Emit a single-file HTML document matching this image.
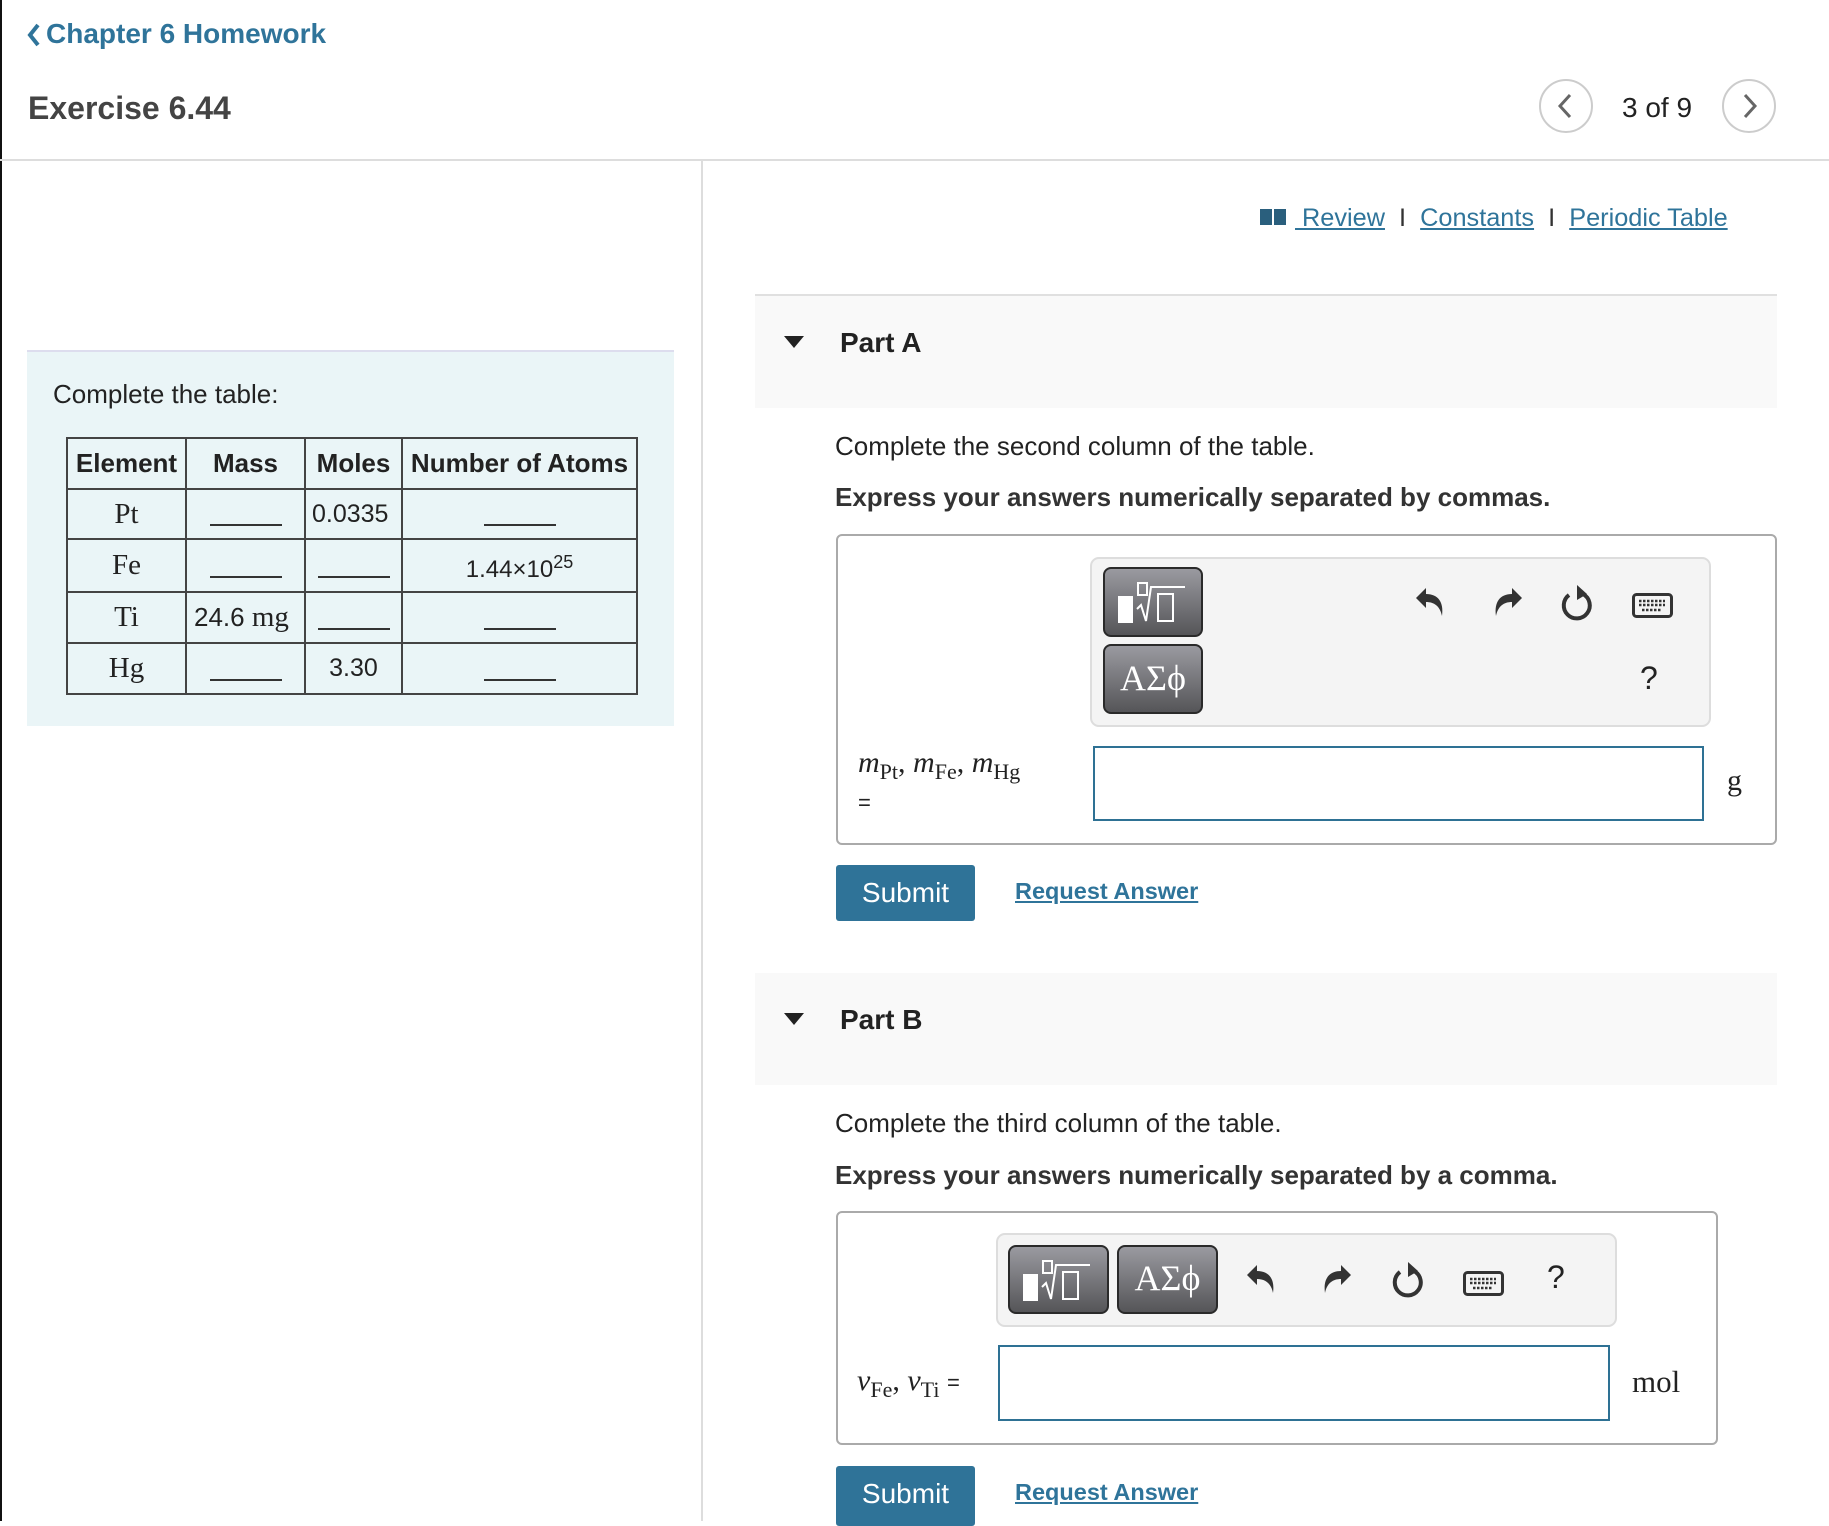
<!DOCTYPE html>
<html><head><meta charset="utf-8"><style>
*{margin:0;padding:0;box-sizing:border-box}
body{width:1829px;height:1521px;position:relative;overflow:hidden;background:#fff;font-family:"Liberation Sans",Arial,sans-serif;color:#222}
.a{position:absolute;white-space:nowrap}
.lnk{color:#2f749a;text-decoration:underline}
.btn{position:absolute;border-radius:8px;background:linear-gradient(#9a9aa0,#555558);border:2px solid #2a2a2a;color:#fff}
.tb{position:absolute;background:#f4f4f4;border:2px solid #ddd;border-radius:9px}
.inp{position:absolute;border:2px solid #2e7194;background:#fff}
.ser{font-family:"Liberation Serif",serif}
table{border-collapse:collapse;position:absolute;left:66px;top:437px}
td{border:2px solid #444;padding:0;text-align:center}
.bl{display:inline-block;width:72px;border-bottom:2px solid #333;vertical-align:bottom;margin-top:22px}
</style></head><body>
<div class="a" style="left:0;top:0;width:2px;height:1521px;background:#111"></div>
<svg class="a" style="left:26px;top:22px" width="16" height="26"><path d="M12 3 L4 13 L12 23" stroke="#2f749a" stroke-width="4" fill="none"/></svg>
<div class="a" style="left:46px;top:18px;font-size:28px;font-weight:bold;color:#2f749a">Chapter 6 Homework</div>
<div class="a" style="left:28px;top:90px;font-size:32px;font-weight:bold;color:#444">Exercise 6.44</div>
<svg class="a" style="left:1538px;top:78px" width="56" height="56"><circle cx="28" cy="28" r="26" fill="#fff" stroke="#ccc" stroke-width="2"/><path d="M32 17 L22 28 L32 39" stroke="#666" stroke-width="3" fill="none"/></svg>
<div class="a" style="left:1622px;top:92px;font-size:28px;color:#222">3 of 9</div>
<svg class="a" style="left:1721px;top:78px" width="56" height="56"><circle cx="28" cy="28" r="26" fill="#fff" stroke="#ccc" stroke-width="2"/><path d="M24 17 L34 28 L24 39" stroke="#666" stroke-width="3" fill="none"/></svg>
<div class="a" style="left:0;top:159px;width:1829px;height:2px;background:#ddd"></div>
<div class="a" style="left:701px;top:161px;width:2px;height:1360px;background:#ddd"></div>

<div class="a" style="left:27px;top:350px;width:647px;height:376px;background:#eaf5f7;border-top:2px solid #dde"></div>
<div class="a" style="left:53px;top:379px;font-size:26px;color:#222">Complete the table:</div>
<table>
<tr style="height:51px;font-weight:bold;font-size:26px"><td style="width:119px">Element</td><td style="width:119px">Mass</td><td style="width:97px">Moles</td><td style="width:235px">Number of Atoms</td></tr>
<tr style="height:50px"><td class="ser" style="font-size:29px">Pt</td><td><span class="bl"></span></td><td style="font-size:25px;text-align:left;padding-left:6px">0.0335</td><td><span class="bl"></span></td></tr>
<tr style="height:53px"><td class="ser" style="font-size:29px">Fe</td><td><span class="bl"></span></td><td><span class="bl"></span></td><td style="font-size:24px;vertical-align:top;padding-top:12px">1.44×10<sup style="font-size:18px">25</sup></td></tr>
<tr style="height:51px"><td class="ser" style="font-size:29px">Ti</td><td style="font-size:26px;text-align:left;padding-left:7px"><span>24.6 </span><span class="ser" style="font-size:29px">mg</span></td><td><span class="bl"></span></td><td><span class="bl"></span></td></tr>
<tr style="height:51px"><td class="ser" style="font-size:29px">Hg</td><td><span class="bl"></span></td><td style="font-size:25px">3.30</td><td><span class="bl"></span></td></tr>
</table>

<svg class="a" style="left:1260px;top:207px" width="28" height="20"><rect x="0" y="2" width="12" height="16" fill="#2a5f7d"/><rect x="14" y="2" width="12" height="16" fill="#2a5f7d"/></svg>
<div class="a" style="left:1295px;top:204px;font-size:25.3px;color:#333"><span class="lnk">&nbsp;Review</span>&nbsp; I &nbsp;<span class="lnk">Constants</span>&nbsp; I &nbsp;<span class="lnk">Periodic Table</span></div>

<div class="a" style="left:755px;top:294px;width:1022px;height:114px;background:#f9f9f9;border-top:2px solid #e0e0e0"></div>
<svg class="a" style="left:782px;top:335px" width="24" height="14"><path d="M2 1 L22 1 L12 13Z" fill="#222"/></svg>
<div class="a" style="left:840px;top:327px;font-size:28px;font-weight:bold">Part A</div>
<div class="a" style="left:835px;top:431px;font-size:26px">Complete the second column of the table.</div>
<div class="a" style="left:835px;top:482px;font-size:26px;font-weight:bold;color:#333">Express your answers numerically separated by commas.</div>
<div class="a" style="left:836px;top:534px;width:941px;height:311px;border:2px solid #aaa;border-radius:6px"></div>
<div class="tb" style="left:1090px;top:557px;width:621px;height:170px"></div>
<div class="btn" style="left:1103px;top:567px;width:100px;height:70px"><svg width="96" height="66"><rect x="13" y="27" width="15" height="27" fill="#fff"/><rect x="33" y="14" width="9" height="12" fill="none" stroke="#fff" stroke-width="2"/><path d="M32 40 L36 36 L41 52 L46 18 L80 18" stroke="#fff" stroke-width="2" fill="none"/><rect x="53" y="25" width="15" height="27" fill="none" stroke="#fff" stroke-width="2"/></svg></div>
<div class="btn ser" style="left:1103px;top:644px;width:100px;height:70px;font-size:36px;text-align:center;line-height:64px">ΑΣϕ</div>
<svg class="a" style="left:1410px;top:584px" width="40" height="40" viewBox="0 0 40 40"><path d="M6 14 L16 4 L16 10 C28 10 34 18 32 32 C30 22 24 18 16 18 L16 24Z" fill="#333"/></svg>
<svg class="a" style="left:1488px;top:584px" width="40" height="40" viewBox="0 0 40 40"><path d="M34 14 L24 4 L24 10 C12 10 6 18 8 32 C10 22 16 18 24 18 L24 24Z" fill="#333"/></svg>
<svg class="a" style="left:1557px;top:583px" width="40" height="42" viewBox="0 0 40 42"><path d="M26 11 A13 13 0 1 1 12 12" stroke="#333" stroke-width="4" fill="none"/><path d="M20 2 L30 11 L20 17Z" fill="#333"/></svg>
<svg class="a" style="left:1632px;top:593px" width="42" height="26"><rect x="1.5" y="1.5" width="38" height="22" rx="3" fill="none" stroke="#333" stroke-width="3"/><path d="M7 8h26M7 12h26M10 17h20" stroke="#333" stroke-width="2.5" stroke-dasharray="2.5 1.5"/></svg>
<div class="a" style="left:1640px;top:660px;font-size:32px;color:#222">?</div>
<div class="a ser" style="left:858px;top:746px;font-size:30px"><i>m</i><sub style="font-size:22px">Pt</sub>, <i>m</i><sub style="font-size:22px">Fe</sub>, <i>m</i><sub style="font-size:22px">Hg</sub></div>
<div class="a" style="left:858px;top:790px;font-size:22px">=</div>
<div class="inp" style="left:1093px;top:746px;width:611px;height:75px"></div>
<div class="a ser" style="left:1727px;top:764px;font-size:30px">g</div>
<div class="a" style="left:836px;top:865px;width:139px;height:56px;background:#2f7398;border-radius:3px;color:#fff;font-size:28px;text-align:center;line-height:56px">Submit</div>
<div class="a lnk" style="left:1015px;top:878px;font-size:23.5px;font-weight:bold">Request Answer</div>

<div class="a" style="left:755px;top:973px;width:1022px;height:112px;background:#f9f9f9"></div>
<svg class="a" style="left:782px;top:1012px" width="24" height="14"><path d="M2 1 L22 1 L12 13Z" fill="#222"/></svg>
<div class="a" style="left:840px;top:1004px;font-size:28px;font-weight:bold">Part B</div>
<div class="a" style="left:835px;top:1108px;font-size:26px">Complete the third column of the table.</div>
<div class="a" style="left:835px;top:1160px;font-size:26px;font-weight:bold;color:#333">Express your answers numerically separated by a comma.</div>
<div class="a" style="left:836px;top:1211px;width:882px;height:234px;border:2px solid #aaa;border-radius:6px"></div>
<div class="tb" style="left:996px;top:1233px;width:621px;height:94px"></div>
<div class="btn" style="left:1008px;top:1245px;width:101px;height:69px"><svg width="97" height="65"><rect x="13" y="27" width="15" height="27" fill="#fff"/><rect x="33" y="14" width="9" height="12" fill="none" stroke="#fff" stroke-width="2"/><path d="M32 40 L36 36 L41 52 L46 18 L80 18" stroke="#fff" stroke-width="2" fill="none"/><rect x="53" y="25" width="15" height="27" fill="none" stroke="#fff" stroke-width="2"/></svg></div>
<div class="btn ser" style="left:1117px;top:1245px;width:101px;height:69px;font-size:36px;text-align:center;line-height:63px">ΑΣϕ</div>
<svg class="a" style="left:1241px;top:1261px" width="40" height="40" viewBox="0 0 40 40"><path d="M6 14 L16 4 L16 10 C28 10 34 18 32 32 C30 22 24 18 16 18 L16 24Z" fill="#333"/></svg>
<svg class="a" style="left:1317px;top:1261px" width="40" height="40" viewBox="0 0 40 40"><path d="M34 14 L24 4 L24 10 C12 10 6 18 8 32 C10 22 16 18 24 18 L24 24Z" fill="#333"/></svg>
<svg class="a" style="left:1388px;top:1260px" width="40" height="42" viewBox="0 0 40 42"><path d="M26 11 A13 13 0 1 1 12 12" stroke="#333" stroke-width="4" fill="none"/><path d="M20 2 L30 11 L20 17Z" fill="#333"/></svg>
<svg class="a" style="left:1463px;top:1271px" width="42" height="26"><rect x="1.5" y="1.5" width="38" height="22" rx="3" fill="none" stroke="#333" stroke-width="3"/><path d="M7 8h26M7 12h26M10 17h20" stroke="#333" stroke-width="2.5" stroke-dasharray="2.5 1.5"/></svg>
<div class="a" style="left:1547px;top:1259px;font-size:32px;color:#222">?</div>
<div class="a ser" style="left:857px;top:1364px;font-size:30px"><i>ν</i><sub style="font-size:22px">Fe</sub>, <i>ν</i><sub style="font-size:22px">Ti</sub> <span style="font-family:'Liberation Sans';font-size:22px">=</span></div>
<div class="inp" style="left:998px;top:1345px;width:612px;height:76px"></div>
<div class="a ser" style="left:1632px;top:1364px;font-size:31px">mol</div>
<div class="a" style="left:836px;top:1466px;width:139px;height:60px;background:#2f7398;border-radius:3px;color:#fff;font-size:28px;text-align:center;line-height:56px">Submit</div>
<div class="a lnk" style="left:1015px;top:1479px;font-size:23.5px;font-weight:bold">Request Answer</div>
</body></html>
